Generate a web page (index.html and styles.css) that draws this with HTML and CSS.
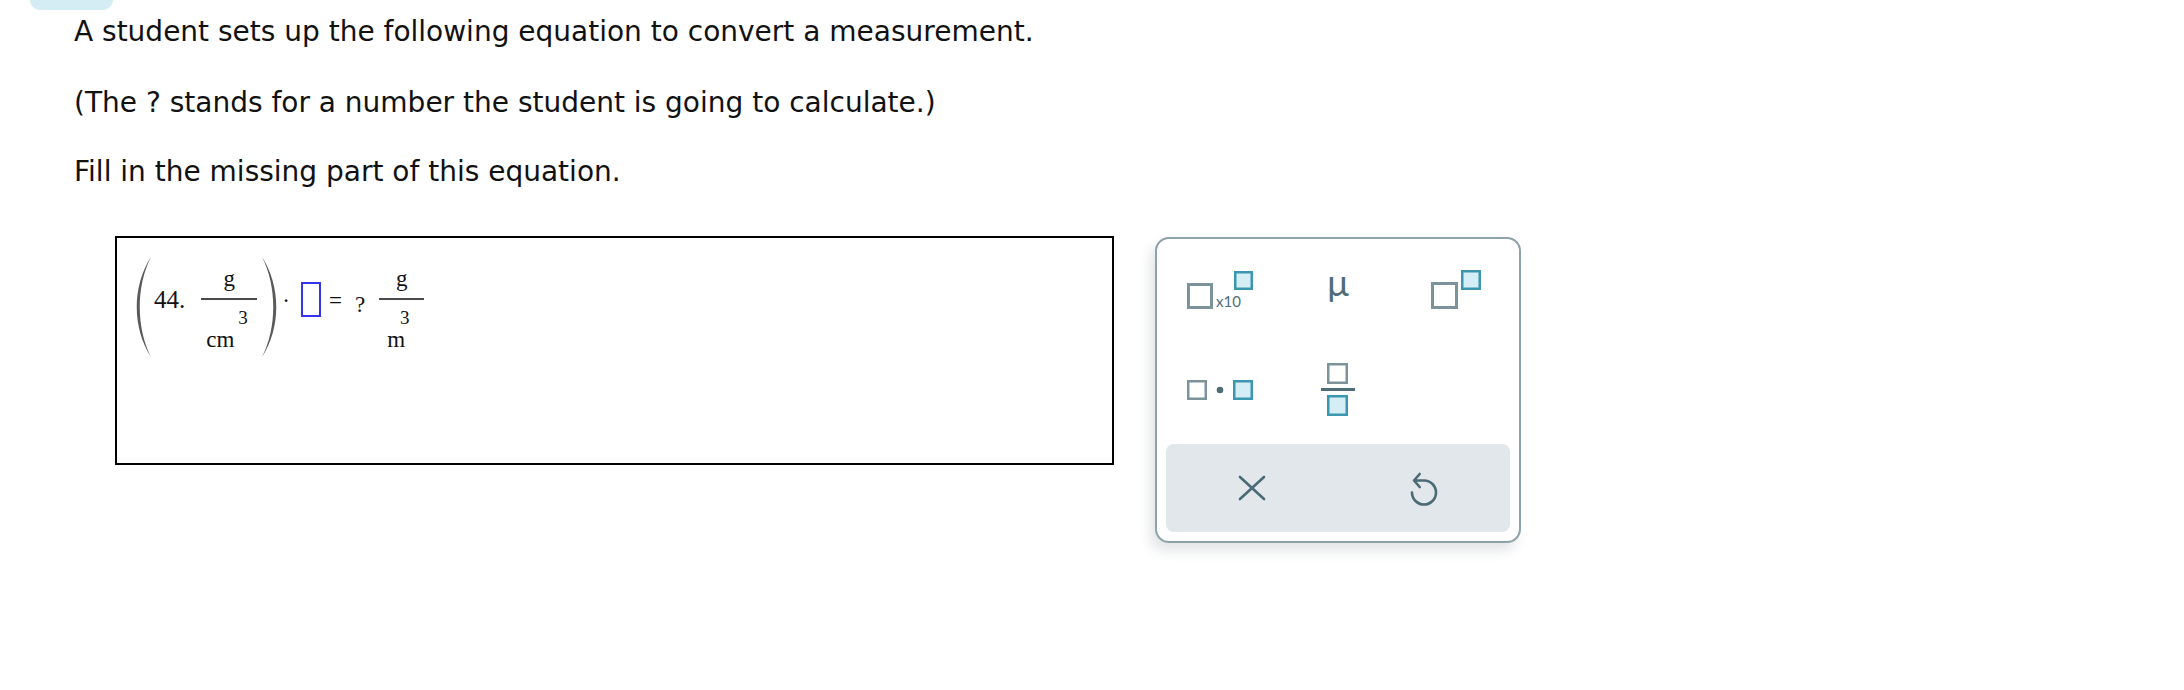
FILE: index.html
```html
<!DOCTYPE html>
<html lang="en">
<head>
<meta charset="utf-8">
<title>Conversion equation</title>
<link rel="stylesheet" href="styles.css">
</head>
<body>
<div class="tab-pill"></div>
<div class="prompt">
  <p class="line line-1">A student sets up the following equation to convert a measurement.</p>
  <p class="line line-2">(The ? stands for a number the student is going to calculate.)</p>
  <p class="line line-3">Fill in the missing part of this equation.</p>
</div>
<div class="workspace">
  <div class="answer-box">
    <div class="equation">
      <svg class="paren" width="20" height="116" viewBox="0 0 20 116"><path d="M18 13 C-1 42 -1 84 18 113 C3 84 3 42 18 13 Z"/></svg>
      <span class="num-44">44.</span>
      <span class="frac frac-a">
        <span class="frac-num">g</span>
        <span class="frac-bar"></span>
        <span class="frac-den">cm<span class="sup">3</span></span>
      </span>
      <svg class="paren paren-r" width="20" height="116" viewBox="0 0 20 116"><path d="M2 13 C21 42 21 84 2 113 C17 84 17 42 2 13 Z"/></svg>
      <span class="cdot">·</span>
      <span class="blank"></span>
      <span class="eq">=</span>
      <span class="qm">?</span>
      <span class="frac frac-b">
        <span class="frac-num">g</span>
        <span class="frac-bar"></span>
        <span class="frac-den">m<span class="sup">3</span></span>
      </span>
    </div>
  </div>
  <div class="keypad">
    <div class="keys">
      <div class="key">
        <svg class="col1" width="68" height="40" viewBox="0 0 68 40">
          <rect class="sq-gray" x="2.5" y="14.5" width="23" height="23" stroke-width="3"/>
          <text class="key-text" x="30" y="37">x10</text>
          <rect class="sq-blue" x="49.25" y="2.25" width="16.5" height="16.5" stroke-width="2.5"/>
        </svg>
      </div>
      <div class="key"><span class="mu">μ</span></div>
      <div class="key">
        <svg class="sup-icon" width="52" height="40" viewBox="0 0 52 40">
          <rect class="sq-gray" x="2.5" y="13.5" width="24" height="24" stroke-width="3"/>
          <rect class="sq-blue" x="32.25" y="1.25" width="17.5" height="17.5" stroke-width="2.5"/>
        </svg>
      </div>
      <div class="key">
        <svg class="col1" width="68" height="22" viewBox="0 0 68 22">
          <rect class="sq-gray" x="2.25" y="2.25" width="17.5" height="17.5" stroke-width="2.5"/>
          <circle class="dot" cx="34" cy="11" r="3.3"/>
          <rect class="sq-blue" x="48.25" y="2.25" width="17.5" height="17.5" stroke-width="2.5"/>
        </svg>
      </div>
      <div class="key">
        <svg width="36" height="56" viewBox="0 0 36 56">
          <rect class="sq-gray" x="8.25" y="2.25" width="18.5" height="18.5" stroke-width="2.5"/>
          <rect class="dot" x="1" y="26" width="34" height="3"/>
          <rect class="sq-blue" x="8.25" y="34.25" width="18.5" height="18.5" stroke-width="2.5"/>
        </svg>
      </div>
      <div class="key"></div>
    </div>
    <div class="actions">
      <div class="action">
        <svg width="28" height="26" viewBox="0 0 28 26"><path class="icon-stroke" d="M2 2 L26 24 M26 2 L2 24"/></svg>
      </div>
      <div class="action">
        <svg width="30" height="36" viewBox="0 0 30 36"><path class="icon-stroke" d="M10.7 4 L5 10.5 L10.7 17 M5 10.5 H15 A12 12 0 1 1 3 22.5"/></svg>
      </div>
    </div>
  </div>
</div>
</body>
</html>
```

FILE: styles.css
```css
html, body {
  margin: 0;
  padding: 0;
  background: #ffffff;
}

body {
  font-family: "DejaVu Sans", Verdana, sans-serif;
  color: #111111;
  width: 2184px;
  height: 690px;
  overflow: hidden;
}

.tab-pill {
  width: 83px;
  height: 10px;
  margin-left: 30px;
  background: #d4ecf3;
  border-radius: 0 0 14px 14px;
}

.prompt {
  margin-left: 74px;
  padding-top: 6px;
}

.line {
  margin: 0;
  font-size: 28px;
  line-height: 32px;
}

.line-2 {
  margin-top: 39px;
}

.line-3 {
  margin-top: 37px;
}

.workspace {
  display: flex;
  align-items: flex-start;
  margin-left: 115px;
  margin-top: 48px;
}

.answer-box {
  width: 995px;
  height: 225px;
  border: 2px solid #000000;
  flex: none;
}

.equation {
  display: flex;
  align-items: flex-start;
  margin-left: 16px;
  padding-top: 8px;
  font-family: "Liberation Serif", "Times New Roman", serif;
  font-size: 23px;
  line-height: 26px;
  color: #111111;
}

.paren {
  flex: none;
  display: block;
  margin-top: -2px;
  margin-bottom: -6px;
}

.paren path {
  fill: #5a5a5a;
}

.paren-r {
  margin-left: 3px;
}

.num-44 {
  margin-top: 41px;
  margin-left: 1px;
  font-size: 25px;
}

.frac {
  display: flex;
  flex-direction: column;
  align-items: stretch;
  flex: none;
}

.frac-a {
  width: 56px;
  margin-left: 16px;
  margin-top: 20px;
}

.frac-b {
  width: 45px;
  margin-left: 14px;
  margin-top: 20px;
}

.frac-num {
  text-align: center;
}

.frac-bar {
  height: 2px;
  margin-top: 6px;
  background: #4a4a4a;
}

.frac-den {
  margin-top: 8px;
  white-space: nowrap;
}

.frac-a .frac-den {
  padding-left: 5px;
}

.frac-b .frac-den {
  padding-left: 8px;
}

.sup {
  font-size: 19px;
  line-height: 19px;
  vertical-align: 23px;
}

.frac-a .sup {
  margin-left: 4px;
}

.frac-b .sup {
  margin-left: -5px;
}

.cdot {
  margin-top: 42px;
  margin-left: 2px;
}

.blank {
  width: 16px;
  height: 31px;
  border: 2px solid #3434f0;
  margin-top: 36px;
  margin-left: 11px;
  flex: none;
}

.eq {
  margin-top: 42px;
  margin-left: 8px;
}

.qm {
  margin-top: 46px;
  margin-left: 13px;
}

.keypad {
  flex: none;
  margin-left: 41px;
  margin-top: 1px;
  border: 2px solid #8da2aa;
  border-radius: 14px;
  padding: 1px 9px 9px 9px;
  box-sizing: content-box;
  width: 344px;
  background: #ffffff;
  box-shadow: -5px 8px 12px rgba(60, 80, 90, 0.14);
}

.keys {
  display: grid;
  grid-template-columns: repeat(3, 1fr);
  grid-template-rows: 100px 100px;
}

.key {
  display: flex;
  align-items: center;
  justify-content: center;
}

.key svg {
  display: block;
}

.col1 {
  margin-right: 6px;
}

.sup-icon {
  margin-left: 6px;
}

.sq-gray {
  fill: #ffffff;
  stroke: #7d939b;
}

.sq-blue {
  fill: #d5edf4;
  stroke: #3b97b0;
}

.dot {
  fill: #4f6e7a;
}

.key-text {
  font-family: Lato, "Open Sans", sans-serif;
  font-size: 15px;
  fill: #4f6e7a;
}

.mu {
  font-family: Lato, "Open Sans", sans-serif;
  font-size: 36px;
  line-height: 36px;
  padding-bottom: 16px;
  color: #4e6d79;
}

.actions {
  display: grid;
  grid-template-columns: 1fr 1fr;
  height: 88px;
  margin-top: 4px;
  background: #e1e7ea;
  border-radius: 8px;
}

.action {
  display: flex;
  align-items: center;
  justify-content: center;
}

.action svg {
  display: block;
}

.icon-stroke {
  fill: none;
  stroke: #4b6a76;
  stroke-width: 2.6;
  stroke-linecap: round;
  stroke-linejoin: round;
}
```
